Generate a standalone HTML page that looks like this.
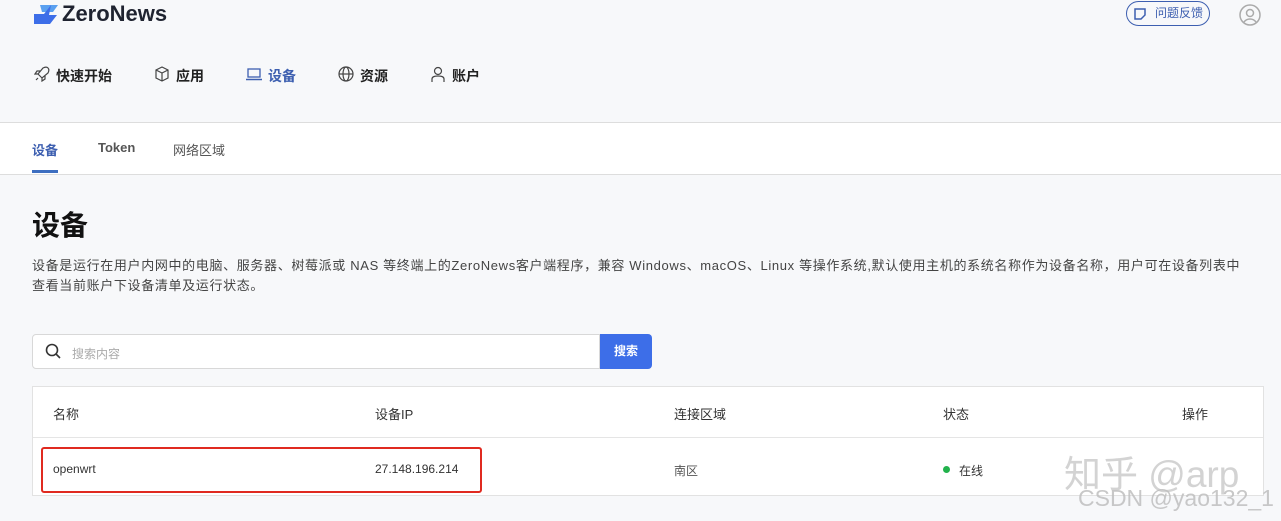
<!DOCTYPE html><html><head><meta charset="utf-8"><style>
body{margin:0;width:1281px;height:521px;overflow:hidden;background:#f7f8fa;font-family:"Liberation Sans","Noto Sans CJK SC",sans-serif;position:relative;color:#222}
.a{position:absolute;white-space:nowrap}
.nav{font-size:14px;font-weight:bold;color:#222}
</style></head><body>
<svg class="a" style="left:32px;top:4px" width="28" height="22"><path d="M8 1h18l-5 7H10z" fill="#5aa0f0"/><path d="M2 10h10l7-9-2 10h8l-7 9H2z" fill="#3d6ee8"/></svg>
<div class="a" style="left:62px;top:1px;font-size:22px;font-weight:bold;color:#1f2330">ZeroNews</div>
<div class="a" style="left:1126px;top:1px;width:84px;height:25px;border:1.5px solid #3d5fb0;border-radius:14px;box-sizing:border-box;font-size:12px;color:#3d5fb0;line-height:22px;padding-left:28px">问题反馈</div>
<svg class="a" style="left:1133px;top:7px" width="14" height="14"><path d="M2 2h10v6l-4 4H2z" fill="none" stroke="#3d5fb0" stroke-width="1.5"/></svg>
<svg class="a" style="left:1238px;top:3px" width="24" height="24"><circle cx="12" cy="12" r="10" fill="none" stroke="#aaa" stroke-width="1.5"/><circle cx="12" cy="10" r="3.5" fill="none" stroke="#aaa" stroke-width="1.5"/><path d="M6 19c3-4 9-4 12 0" fill="none" stroke="#aaa" stroke-width="1.5"/></svg>
<svg class="a" style="left:34px;top:66px" width="16" height="16"><path d="M6 10l-2-2 5-6c2-1 4-1 5 0 1 1 1 3 0 5l-6 5z M4 8l-3 0 2-3 3 0 M8 12l0 3 3-2 0-3 M4 12l-2 2" fill="none" stroke="#444" stroke-width="1.2"/></svg>
<div class="a nav" style="left:56px;top:66px">快速开始</div>
<svg class="a" style="left:154px;top:66px" width="16" height="16"><path d="M8 1l6 3v8l-6 3-6-3V4z M2 4l6 3 6-3 M8 7v8" fill="none" stroke="#444" stroke-width="1.2"/></svg>
<div class="a nav" style="left:176px;top:66px">应用</div>
<svg class="a" style="left:246px;top:67px" width="16" height="14"><rect x="2" y="2" width="12" height="8" fill="none" stroke="#3d5fb0" stroke-width="1.3"/><path d="M0 12.5h16" stroke="#3d5fb0" stroke-width="1.5"/></svg>
<div class="a nav" style="left:268px;top:66px;color:#3d5fb0">设备</div>
<svg class="a" style="left:338px;top:66px" width="16" height="16"><circle cx="8" cy="8" r="7" fill="none" stroke="#444" stroke-width="1.2"/><ellipse cx="8" cy="8" rx="3" ry="7" fill="none" stroke="#444" stroke-width="1.2"/><path d="M1 8h14" stroke="#444" stroke-width="1.2"/></svg>
<div class="a nav" style="left:360px;top:66px">资源</div>
<svg class="a" style="left:431px;top:66px" width="14" height="17"><circle cx="7" cy="5" r="3.5" fill="none" stroke="#444" stroke-width="1.2"/><path d="M1 16v-3c0-2 2-3 6-3s6 1 6 3v3" fill="none" stroke="#444" stroke-width="1.2"/></svg>
<div class="a nav" style="left:452px;top:66px">账户</div>
<div class="a" style="left:0;top:122px;width:1281px;height:51px;background:#fff;border-top:1px solid #ddd;border-bottom:1px solid #ddd"></div>
<div class="a" style="left:32px;top:140px;font-size:13px;font-weight:bold;color:#3d5fb0">设备</div>
<div class="a" style="left:32px;top:170px;width:26px;height:3px;background:#3d6ec0"></div>
<div class="a" style="left:98px;top:140px;font-size:13px;font-weight:bold;color:#555">Token</div>
<div class="a" style="left:173px;top:140px;font-size:13px;color:#555">网络区域</div>
<div class="a" style="left:32px;top:204px;font-size:28px;font-weight:bold;color:#111">设备</div>
<div class="a" style="left:32px;top:256px;font-size:13px;letter-spacing:0.65px;color:#444;line-height:20px;white-space:normal;width:1220px">设备是运行在用户内网中的电脑、服务器、树莓派或 NAS 等终端上的ZeroNews客户端程序，兼容 Windows、macOS、Linux 等操作系统,默认使用主机的系统名称作为设备名称，用户可在设备列表中查看当前账户下设备清单及运行状态。</div>
<div class="a" style="left:32px;top:334px;width:568px;height:35px;background:#fff;border:1px solid #d8d8d8;box-sizing:border-box;border-radius:4px 0 0 4px"></div>
<svg class="a" style="left:45px;top:343px" width="16" height="16"><circle cx="7" cy="7" r="5.5" fill="none" stroke="#333" stroke-width="1.6"/><path d="M11 11l4 4" stroke="#333" stroke-width="1.6"/></svg>
<div class="a" style="left:72px;top:345px;font-size:12px;color:#aaa">搜索内容</div>
<div class="a" style="left:600px;top:334px;width:52px;height:35px;background:#3d6ee8;color:#fff;font-size:12px;font-weight:bold;text-align:center;line-height:35px;border-radius:0 4px 4px 0">搜索</div>
<div class="a" style="left:32px;top:386px;width:1232px;height:110px;background:#fff;border:1px solid #e2e2e2;box-sizing:border-box"></div>
<div class="a" style="left:33px;top:437px;width:1230px;height:1px;background:#e5e5e5"></div>
<div class="a" style="left:53px;top:404px;font-size:13px;color:#333">名称</div>
<div class="a" style="left:375px;top:404px;font-size:13px;color:#333">设备IP</div>
<div class="a" style="left:674px;top:404px;font-size:13px;color:#333">连接区域</div>
<div class="a" style="left:943px;top:404px;font-size:13px;color:#333">状态</div>
<div class="a" style="left:1182px;top:404px;font-size:13px;color:#333">操作</div>
<div class="a" style="left:53px;top:462px;font-size:12px;color:#333">openwrt</div>
<div class="a" style="left:375px;top:462px;font-size:12px;color:#333">27.148.196.214</div>
<div class="a" style="left:674px;top:462px;font-size:12px;color:#555">南区</div>
<div class="a" style="left:943px;top:466px;width:7px;height:7px;border-radius:50%;background:#22b24c"></div>
<div class="a" style="left:959px;top:462px;font-size:12px;color:#333">在线</div>
<div class="a" style="left:41px;top:447px;width:441px;height:46px;border:2px solid #e02a20;box-sizing:border-box;border-radius:3px"></div>
<div class="a" style="left:1064px;top:444px;font-size:37px;color:rgba(200,200,200,.8)">知乎 @arp</div>
<div class="a" style="left:1078px;top:485px;font-size:23px;color:rgba(190,190,190,.85)">CSDN @yao132_1</div>
</body></html>
